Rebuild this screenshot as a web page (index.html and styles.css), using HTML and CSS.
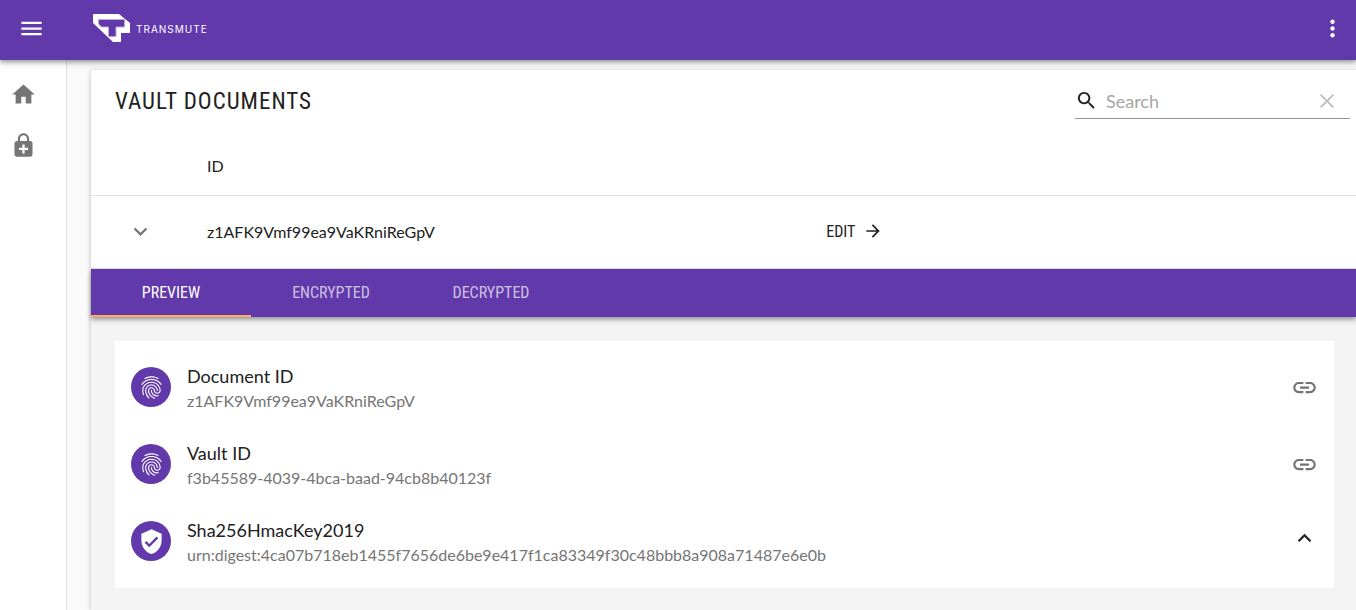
FILE: index.html
```html
<!DOCTYPE html>
<html lang="en">
<head>
  <meta charset="UTF-8">
  <title>Transmute</title>
  <meta name="viewport" content="width=device-width, initial-scale=1.0">
  <link rel="stylesheet" href="styles.css">
</head>
<body>
  <svg class="sprite" aria-hidden="true">
    <symbol id="fingerprint" viewBox="0 0 24 24">
      <path d="M17.81 4.47c-.08 0-.16-.02-.23-.06C15.66 3.42 14 3 12.01 3c-1.98 0-3.86.47-5.57 1.41-.24.13-.54.04-.68-.2-.13-.24-.04-.55.2-.68C7.82 2.52 9.86 2 12.01 2c2.13 0 3.99.47 6.03 1.52.25.13.34.43.21.67-.09.18-.26.28-.44.28zM3.5 9.72c-.1 0-.2-.03-.29-.09-.23-.16-.28-.47-.12-.7.99-1.4 2.25-2.5 3.75-3.27C9.98 4.04 14 4.03 17.15 5.65c1.5.77 2.76 1.86 3.75 3.25.16.22.11.54-.12.7-.23.16-.54.11-.7-.12-.9-1.26-2.04-2.25-3.39-2.94-2.87-1.47-6.54-1.47-9.4.01-1.36.7-2.5 1.7-3.4 2.96-.08.14-.23.21-.39.21zm6.25 12.07c-.13 0-.26-.05-.35-.15-.87-.87-1.34-1.43-2.01-2.64-.69-1.23-1.05-2.73-1.05-4.34 0-2.97 2.54-5.39 5.66-5.39s5.66 2.42 5.66 5.39c0 .28-.22.5-.5.5s-.5-.22-.5-.5c0-2.42-2.09-4.39-4.66-4.39-2.57 0-4.66 1.97-4.66 4.39 0 1.44.32 2.77.93 3.85.64 1.15 1.08 1.64 1.85 2.42.19.2.19.51 0 .71-.11.1-.24.15-.37.15zm7.17-1.85c-1.19 0-2.24-.3-3.1-.89-1.49-1.01-2.38-2.65-2.38-4.39 0-.28.22-.5.5-.5s.5.22.5.5c0 1.41.72 2.74 1.94 3.56.71.48 1.54.71 2.54.71.24 0 .64-.03 1.04-.1.27-.05.53.13.58.41.05.27-.13.53-.41.58-.57.11-1.07.12-1.21.12zM14.91 22c-.04 0-.09-.01-.13-.02-1.59-.44-2.63-1.03-3.72-2.1-1.4-1.39-2.17-3.24-2.17-5.22 0-1.62 1.38-2.94 3.08-2.94 1.7 0 3.08 1.32 3.08 2.94 0 1.07.93 1.94 2.08 1.94s2.08-.87 2.08-1.94c0-3.77-3.25-6.83-7.25-6.83-2.84 0-5.44 1.58-6.61 4.03-.39.81-.59 1.76-.59 2.8 0 .78.07 2.01.67 3.61.1.26-.03.55-.29.64-.26.1-.55-.04-.64-.29-.49-1.31-.73-2.61-.73-3.96 0-1.2.23-2.29.68-3.24 1.33-2.79 4.28-4.6 7.51-4.6 4.55 0 8.25 3.51 8.25 7.83 0 1.62-1.38 2.94-3.08 2.94s-3.08-1.32-3.08-2.94c0-1.07-.93-1.94-2.08-1.94s-2.08.87-2.08 1.94c0 1.71.66 3.31 1.87 4.51.95.94 1.86 1.46 3.27 1.85.27.07.42.35.35.61-.05.23-.26.38-.47.38z"/>
    </symbol>
    <symbol id="link" viewBox="0 0 24 24">
      <path d="M3.9 12c0-1.71 1.39-3.1 3.1-3.1h4V7H7c-2.76 0-5 2.24-5 5s2.24 5 5 5h4v-1.9H7c-1.71 0-3.1-1.39-3.1-3.1zM8 13h8v-2H8v2zm9-6h-4v1.9h4c1.71 0 3.1 1.39 3.1 3.1s-1.39 3.1-3.1 3.1h-4V17h4c2.76 0 5-2.24 5-5s-2.24-5-5-5z"/>
    </symbol>
  </svg>

  <header class="topbar">
    <button type="button" aria-label="Open menu">
      <svg class="icon" viewBox="0 0 24 24"><path d="M3 18h18v-2H3v2zm0-5h18v-2H3v2zm0-7v2h18V6H3z"/></svg>
    </button>
    <a href="#" class="logo">
      <svg class="logo-mark" viewBox="0 0 38 28">
        <path fill="#fff" d="M0 0h26l11 9v10h-9v9h-8L0 9z"/>
        <path class="logo-t" d="M5.5 5.5h26v7.500h-8.500v9.500h-7.500v-9.500h-7l-3-3z"/>
      </svg>
      <span>TRANSMUTE</span>
    </a>
    <button type="button" class="more" aria-label="More">
      <svg class="icon" viewBox="0 0 24 24"><path d="M12 8c1.1 0 2-.9 2-2s-.9-2-2-2-2 .9-2 2 .9 2 2 2zm0 2c-1.1 0-2 .9-2 2s.9 2 2 2 2-.9 2-2-.9-2-2-2zm0 6c-1.1 0-2 .9-2 2s.9 2 2 2 2-.9 2-2-.9-2-2-2z"/></svg>
    </button>
  </header>

  <div class="layout">
    <nav class="sidebar">
      <a href="#" aria-label="Home"><svg class="icon" viewBox="0 0 24 24"><path d="M10 20v-6h4v6h5v-8h3L12 3 2 12h3v8z"/></svg></a>
      <a href="#" aria-label="Vault"><svg class="icon" viewBox="0 0 24 24"><path d="M18 8h-1V6c0-2.76-2.24-5-5-5S7 3.24 7 6v2H6c-1.1 0-2 .9-2 2v10c0 1.1.9 2 2 2h12c1.1 0 2-.9 2-2V10c0-1.1-.9-2-2-2zM8.9 6c0-1.71 1.39-3.1 3.1-3.1s3.1 1.39 3.1 3.1v2H8.9V6zM16 16h-3v3h-2v-3H8v-2h3v-3h2v3h3v2z"/></svg></a>
    </nav>

    <main class="content">
      <section class="card">
        <div class="toolbar">
          <h1>VAULT DOCUMENTS</h1>
          <div class="search">
            <svg class="search-icon" viewBox="0 0 24 24"><path d="M15.5 14h-.79l-.28-.27C15.41 12.59 16 11.11 16 9.5 16 5.91 13.09 3 9.5 3S3 5.91 3 9.5 5.91 16 9.5 16c1.61 0 3.09-.59 4.23-1.57l.27.28v.79l5 4.99L20.49 19l-4.99-5zm-6 0C7.01 14 5 11.99 5 9.5S7.01 5 9.5 5 14 7.01 14 9.5 11.99 14 9.5 14z"/></svg>
            <input type="text" placeholder="Search" aria-label="Search">
            <button type="button" class="clear" aria-label="Clear search">
              <svg class="clear-icon" viewBox="0 0 24 24"><path d="M5 5l14 14M19 5L5 19"/></svg>
            </button>
          </div>
        </div>

        <table class="docs">
          <thead>
            <tr>
              <th class="col-toggle"></th>
              <th class="col-id">ID</th>
              <th></th>
            </tr>
          </thead>
          <tbody>
            <tr>
              <td class="col-toggle">
                <button type="button" class="toggle" aria-label="Toggle details">
                  <svg class="icon" viewBox="0 0 24 24"><path d="M16.59 8.59L12 13.17 7.41 8.59 6 10l6 6 6-6z"/></svg>
                </button>
              </td>
              <td>z1AFK9Vmf99ea9VaKRniReGpV</td>
              <td>
                <button type="button" class="edit">EDIT
                  <svg class="edit-icon" viewBox="0 0 24 24"><path d="M12 4l-1.41 1.41L16.17 11H4v2h12.17l-5.58 5.59L12 20l8-8z"/></svg>
                </button>
              </td>
            </tr>
          </tbody>
        </table>

        <div class="tabs" role="tablist">
          <button type="button" role="tab" class="tab active" aria-selected="true">PREVIEW</button>
          <button type="button" role="tab" class="tab">ENCRYPTED</button>
          <button type="button" role="tab" class="tab">DECRYPTED</button>
        </div>

        <div class="panel">
          <ul class="list">
            <li>
              <span class="avatar"><svg class="icon" aria-hidden="true"><use href="#fingerprint"/></svg></span>
              <div class="text">
                <div class="primary">Document ID</div>
                <div class="secondary">z1AFK9Vmf99ea9VaKRniReGpV</div>
              </div>
              <a href="#" class="action" aria-label="Document link"><svg class="icon"><use href="#link"/></svg></a>
            </li>
            <li>
              <span class="avatar"><svg class="icon" aria-hidden="true"><use href="#fingerprint"/></svg></span>
              <div class="text">
                <div class="primary">Vault ID</div>
                <div class="secondary">f3b45589-4039-4bca-baad-94cb8b40123f</div>
              </div>
              <a href="#" class="action" aria-label="Vault link"><svg class="icon"><use href="#link"/></svg></a>
            </li>
            <li>
              <span class="avatar"><svg class="icon" viewBox="0 0 24 24"><path d="M12 1L3 5v6c0 5.55 3.84 10.74 9 12 5.16-1.26 9-6.45 9-12V5l-9-4zm-2 16l-4-4 1.41-1.41L10 14.17l6.59-6.59L18 9l-8 8z"/></svg></span>
              <div class="text">
                <div class="primary">Sha256HmacKey2019</div>
                <div class="secondary">urn:digest:4ca07b718eb1455f7656de6be9e417f1ca83349f30c48bbb8a908a71487e6e0b</div>
              </div>
              <button type="button" class="action dark" aria-label="Collapse">
                <svg class="icon" viewBox="0 0 24 24"><path d="M12 5l-6 6 1.41 1.41L12 7.83l4.59 4.58L18 11z"/></svg>
              </button>
            </li>
          </ul>
        </div>
      </section>
    </main>
  </div>
</body>
</html>
```
FILE: styles.css
```css
* {
  box-sizing: border-box;
}

body {
  font-family: Lato, sans-serif;
  font-size: 16px;
  color: #212121;
  background-color: #fafafa;
  margin: 0;
  min-height: 100vh;
  display: flex;
  flex-direction: column;
}

button {
  font-family: "Roboto Condensed", "Liberation Sans Narrow", Roboto, sans-serif;
  font-size: 16px;
  color: inherit;
  background: none;
  border: none;
  padding: 0;
  cursor: pointer;
}

a {
  color: inherit;
  text-decoration: none;
}

.sprite {
  display: none;
}

.icon {
  display: block;
  width: 27px;
  height: 27px;
  fill: currentColor;
}

.topbar {
  position: relative;
  z-index: 2;
  display: flex;
  align-items: center;
  height: 60px;
  padding: 0 10px 4px 18px;
  color: #fff;
  background-color: #6239ab;
  box-shadow: 0 2px 4px rgba(0, 0, 0, 0.3), 0 4px 6px rgba(0, 0, 0, 0.12);
}

.logo {
  display: flex;
  align-items: center;
  gap: 5px;
  margin-left: 48px;
  font-family: Inter, sans-serif;
  font-size: 10px;
  letter-spacing: 1px;
}

.logo span {
  padding-top: 2px;
}

.logo-mark {
  width: 38px;
  height: 28px;
}

.logo-t {
  fill: #6239ab;
  stroke: #bba9dc;
}

.more {
  margin-left: auto;
}

.layout {
  display: flex;
  flex: 1;
}

.sidebar {
  display: flex;
  flex-direction: column;
  gap: 24px;
  width: 67px;
  padding: 21px 10px;
  color: #757575;
  background-color: #fff;
  border-right: 1px solid #e0e0e0;
}

.content {
  display: flex;
  flex: 1;
  min-width: 0;
  padding: 10px 0 0 24px;
}

.card {
  flex: 1;
  min-width: 0;
  background-color: #f4f4f4;
  border-radius: 4px 0 0 0;
  box-shadow: 0 1px 5px rgba(0, 0, 0, 0.25);
}

.toolbar {
  display: flex;
  align-items: center;
  justify-content: space-between;
  height: 68px;
  padding: 0 6px 6px 24px;
  background-color: #fff;
  border-radius: 4px 0 0 0;
}

h1 {
  margin: 0;
  font-family: "Roboto Condensed", "Liberation Sans Narrow", Roboto, sans-serif;
  font-size: 23px;
  font-weight: 400;
  letter-spacing: 1px;
}

.search {
  display: flex;
  align-items: center;
  width: 275px;
  height: 36px;
  border-bottom: 1px solid #949494;
}

.search-icon {
  width: 23px;
  height: 23px;
  fill: #212121;
}

.search input {
  flex: 1;
  min-width: 0;
  height: 32px;
  padding: 0 8px;
  font-family: inherit;
  font-size: 18px;
  border: none;
  outline: none;
  background: none;
}

.search input::placeholder {
  color: #a6a6a6;
}

.clear {
  padding: 0 12px;
}

.clear-icon {
  display: block;
  width: 22px;
  height: 22px;
  stroke: #bdbdbd;
  stroke-width: 2;
}

.docs {
  width: 100%;
  border-collapse: separate;
  border-spacing: 0;
  table-layout: fixed;
  background-color: #fff;
}

.docs th,
.docs td {
  padding: 0 24px 2px;
  text-align: left;
  font-weight: 400;
  border-bottom: 1px solid #e0e0e0;
}

.docs th {
  height: 58px;
}

.docs td {
  height: 73px;
}

.docs .col-toggle {
  width: 92px;
  padding: 2px 0 0 36px;
}

.col-id {
  width: 48%;
}

.toggle {
  color: #757575;
}

.edit {
  display: flex;
  align-items: center;
  gap: 8px;
  padding: 6px 12px;
}

.edit-icon {
  width: 20px;
  height: 20px;
  fill: currentColor;
}

.tabs {
  position: relative;
  display: flex;
  height: 48px;
  background-color: #6239ab;
  box-shadow: 0 2px 4px rgba(0, 0, 0, 0.3), 0 4px 6px rgba(0, 0, 0, 0.12);
}

.tab {
  width: 160px;
  color: rgba(255, 255, 255, 0.7);
  border-bottom: 2px solid transparent;
}

.tab.active {
  color: #fff;
  border-bottom-color: #ffad5c;
}

.panel {
  padding: 24px 22px 22px 24px;
}

.list {
  list-style: none;
  margin: 0;
  padding: 8px 0;
  background-color: #fff;
}

.list li {
  display: flex;
  align-items: center;
  gap: 16px;
  padding: 12px 16px 13px;
}

.avatar {
  display: flex;
  align-items: center;
  justify-content: center;
  width: 40px;
  height: 40px;
  flex-shrink: 0;
  color: #fff;
  background-color: #6239ab;
  border-radius: 50%;
}

.text {
  flex: 1;
  min-width: 0;
  padding-top: 2px;
}

.primary {
  font-size: 18px;
  line-height: 26px;
}

.secondary {
  line-height: 24px;
  color: #757575;
  overflow-wrap: anywhere;
}

.action {
  color: #757575;
}

.action.dark {
  color: #212121;
}
```
